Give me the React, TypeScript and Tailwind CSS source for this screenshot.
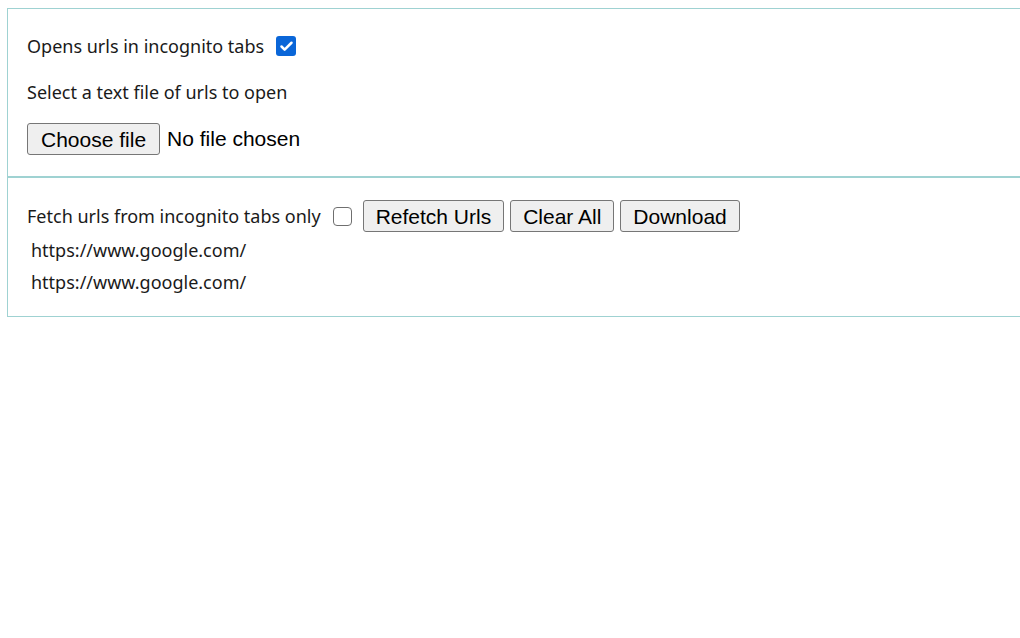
import { Check } from "lucide-react";

const label = "text-[18px] text-[#1a1a1a] [font-family:'Noto_Sans',sans-serif]";
const btn =
  "h-[32px] px-[12px] bg-[#efefef] border border-[#767676] rounded-[3px] text-[21px] text-black leading-none [font-family:'Liberation_Sans',Arial,sans-serif]";

const CheckBox = ({ checked }: { checked: boolean }) =>
  checked ? (
    <span className="w-[20px] h-[20px] rounded-[3px] bg-[#0a66d8] flex items-center justify-center">
      <Check className="w-[15px] h-[15px] text-white" strokeWidth={4} />
    </span>
  ) : (
    <span className="block w-[19px] h-[19px] rounded-[4px] border border-[#6f6f6f] bg-white" />
  );

const urls = ["https://www.google.com/", "https://www.google.com/"];

export default function App() {
  return (
    <div className="min-h-screen bg-white pt-[8px] pl-[7px] overflow-hidden">
      <div className="border-l border-t border-b border-[#9fd2d2]">
        <section className="pl-[19px] pt-[25px] pb-[21px] border-b-2 border-[#9fd2d2]">
          <div className="h-[24px] flex items-center gap-[12px]">
            <span className={label}>Opens urls in incognito tabs</span>
            <CheckBox checked />
          </div>
          <div className="h-[24px] mt-[22px] flex items-center">
            <span className={label}>Select a text file of urls to open</span>
          </div>
          <div className="mt-[19px] flex items-center gap-[7px]">
            <button className={btn + " px-[13px]"}>Choose file</button>
            <span className="text-[21px] text-black [font-family:'Liberation_Sans',Arial,sans-serif]">
              No file chosen
            </span>
          </div>
        </section>
        <section className="pl-[19px] pt-[22px] pb-[18px]">
          <div className="flex items-center">
            <span className={label}>Fetch urls from incognito tabs only</span>
            <span className="ml-[12px] mr-[11px] block">
              <CheckBox checked={false} />
            </span>
            <div className="flex gap-[6px]">
              <button className={btn}>Refetch Urls</button>
              <button className={btn}>Clear All</button>
              <button className={btn}>Download</button>
            </div>
          </div>
          <div className="mt-[2px] pl-[4px]">
            {urls.map((u, i) => (
              <div key={i} className={"h-[32px] flex items-center " + label}>
                {u}
              </div>
            ))}
          </div>
        </section>
      </div>
    </div>
  );
}
